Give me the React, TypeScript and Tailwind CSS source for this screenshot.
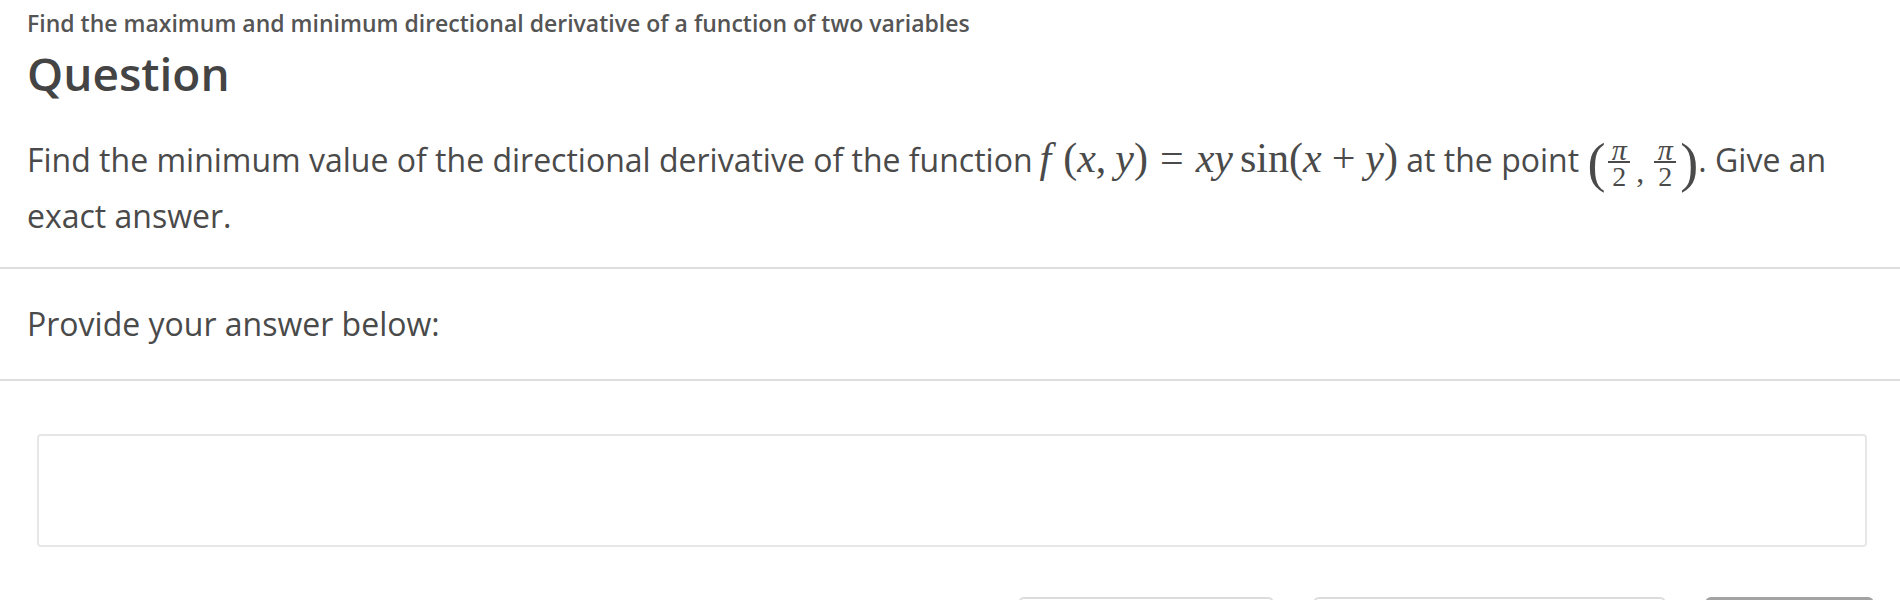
import React from "react";

function Frac() {
  return (
    <span className="inline-flex flex-col items-center font-['Liberation_Serif',serif] text-[30px] leading-[22px]">
      <span className="italic px-[3px]">π</span>
      <span className="block h-[1.5px] w-[22px] bg-[#4a4a4a]" />
      <span className="px-[3px] pt-[3px] text-[28px]">2</span>
    </span>
  );
}

export default function App() {
  return (
    <div className="w-[1900px] min-h-[600px] bg-white font-['Open_Sans',sans-serif] text-[#4a4a4a]">
      <div className="px-[27px] pt-[8px]">
        <div className="text-[23px] font-semibold leading-[30px] text-[#555]">
          Find the maximum and minimum directional derivative of a function of two variables
        </div>
        <h1 className="mt-[6px] text-[46px] font-semibold leading-[58px] text-[#444]">Question</h1>
        <p className="mt-[32px] pb-[25px] text-[32px] leading-[52px]">
          Find the minimum value of the directional derivative of the function
          <span className="ml-[7px] font-['Liberation_Serif',serif] text-[42px] leading-[42px] whitespace-nowrap">
            <i>f</i>
            <span className="ml-[12px]">(</span>
            <i>x</i>,<span className="ml-[9px]" />
            <i>y</i>)
            <span className="mx-[12px]">=</span>
            <i>xy</i>
            <span className="ml-[7px]">sin(</span>
            <i>x</i>
            <span className="mx-[10px]">+</span>
            <i>y</i>)
          </span>{" "}
          at the point{" "}
          <span className="inline-flex items-center align-middle whitespace-nowrap">
            <span className="font-['Liberation_Serif',serif] text-[54px] leading-none">(</span>
            <span className="w-[3px]" />
            <Frac />
            <span className="ml-[6px] mr-[10px] mt-[16px] font-['Liberation_Serif',serif] text-[32px] leading-none">,</span>
            <Frac />
            <span className="w-[4px]" />
            <span className="font-['Liberation_Serif',serif] text-[54px] leading-none">)</span>
          </span>
          . Give an exact answer.
        </p>
      </div>
      <div className="border-t-2 border-[#dedede]" />
      <div className="px-[27px] py-[28px] text-[32px] leading-[54px]">Provide your answer below:</div>
      <div className="border-t-2 border-[#dedede]" />
      <div className="pl-[37px] pr-[33px] pt-[53px]">
        <div className="h-[113px] rounded-[4px] border-2 border-[#e6e6e6] bg-white" />
        <div className="mt-[50px] flex justify-end gap-[39px]">
          <button className="h-[60px] w-[256px] rounded-[6px] border-2 border-[#dcdcdc] bg-white text-[28px]">Save</button>
          <button className="h-[60px] w-[353px] rounded-[6px] border-2 border-[#dcdcdc] bg-white text-[28px]">Next question</button>
          <button className="mr-[-7px] h-[60px] w-[169px] rounded-[6px] border-2 border-[#a3a3a3] bg-[#a3a3a3] text-[28px] text-white">Submit</button>
        </div>
      </div>
    </div>
  );
}
